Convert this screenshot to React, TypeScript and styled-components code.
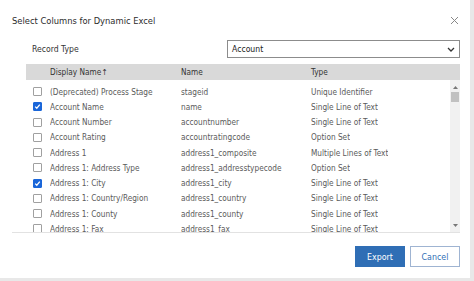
import styled, { createGlobalStyle } from 'styled-components';

const GlobalStyle = createGlobalStyle`
	html, body {
		margin: 0;
		padding: 0;
		background-color: #e8e8e8;
		font-family: 'DejaVu Sans Condensed', 'Liberation Sans', sans-serif;
	}
`;

type Column = { label: string; checked: boolean; name: string; type: string };

const rows: Column[] = [
	{ label: '(Deprecated) Process Stage', checked: false, name: 'stageid', type: 'Unique Identifier' },
	{ label: 'Account Name', checked: true, name: 'name', type: 'Single Line of Text' },
	{ label: 'Account Number', checked: false, name: 'accountnumber', type: 'Single Line of Text' },
	{ label: 'Account Rating', checked: false, name: 'accountratingcode', type: 'Option Set' },
	{ label: 'Address 1', checked: false, name: 'address1_composite', type: 'Multiple Lines of Text' },
	{ label: 'Address 1: Address Type', checked: false, name: 'address1_addresstypecode', type: 'Option Set' },
	{ label: 'Address 1: City', checked: true, name: 'address1_city', type: 'Single Line of Text' },
	{ label: 'Address 1: Country/Region', checked: false, name: 'address1_country', type: 'Single Line of Text' },
	{ label: 'Address 1: County', checked: false, name: 'address1_county', type: 'Single Line of Text' },
	{ label: 'Address 1: Fax', checked: false, name: 'address1_fax', type: 'Single Line of Text' },
];

export default function App() {
	return (
		<>
			<GlobalStyle />
			<SDialog>
				<STitleBar>
					<STitle>Select Columns for Dynamic Excel</STitle>
					<SClose>
						<svg width='9' height='9' viewBox='0 0 9 9'>
							<path d='M1 1L8 8M8 1L1 8' stroke='#888' strokeWidth='1' fill='none' />
						</svg>
					</SClose>
				</STitleBar>
				<SFieldRow>
					<SFieldLabel>Record Type</SFieldLabel>
					<SSelect>
						<span>Account</span>
						<svg width='8' height='5' viewBox='0 0 8 5'>
							<path d='M1 1L4 4L7 1' stroke='#333' strokeWidth='1.3' fill='none' />
						</svg>
					</SSelect>
				</SFieldRow>
				<STable>
					<SHeadRow>
						<SCheckCell />
						<SHeadCell $width={131}>Display Name↑</SHeadCell>
						<SHeadCell $width={130}>Name</SHeadCell>
						<SHeadCell>Type</SHeadCell>
					</SHeadRow>
					<SBody>
						<SRows>
							{rows.map((r) => (
								<SRow key={r.label}>
									<SCheckCell>
										<SCheckbox $checked={r.checked}>
											{r.checked && (
												<svg width='7' height='7' viewBox='0 0 7 7'>
													<path d='M1.2 3.6L2.8 5.2L5.8 1.6' stroke='#fff' strokeWidth='1.3' fill='none' />
												</svg>
											)}
										</SCheckbox>
									</SCheckCell>
									<SCell $width={131}>{r.label}</SCell>
									<SCell $width={130}>{r.name}</SCell>
									<SCell>{r.type}</SCell>
								</SRow>
							))}
						</SRows>
						<SScrollbar>
							<SArrow viewBox='0 0 5 3' width='5' height='3'>
								<path d='M0 3L2.5 0L5 3Z' fill='#777' />
							</SArrow>
							<SThumb />
							<SSpacer />
							<SArrow viewBox='0 0 5 3' width='5' height='3'>
								<path d='M0 0L2.5 3L5 0Z' fill='#777' />
							</SArrow>
						</SScrollbar>
					</SBody>
				</STable>
				<SFooter>
					<SPrimaryButton type='button'>Export</SPrimaryButton>
					<SButton type='button'>Cancel</SButton>
				</SFooter>
			</SDialog>
		</>
	);
}

const SDialog = styled.div`
	width: 470px;
	height: 278px;
	background-color: #ffffff;
	box-sizing: border-box;
	padding: 0 10px 0 12px;
	display: flex;
	flex-direction: column;
	color: #333;
`;

const STitleBar = styled.div`
	height: 40px;
	display: flex;
	align-items: center;
	justify-content: space-between;
`;

const STitle = styled.div`
	font-size: 9.3px;
	color: #2b2b2b;
	margin-top: 1px;
`;

const SClose = styled.div`
	width: 12px;
	display: flex;
	align-items: center;
	justify-content: center;
`;

const SFieldRow = styled.div`
	display: flex;
	align-items: center;
	justify-content: space-between;
	height: 18px;
	padding-left: 20px;
`;

const SFieldLabel = styled.div`
	font-size: 8.6px;
	color: #333;
`;

const SSelect = styled.div`
	width: 233px;
	height: 18px;
	box-sizing: border-box;
	border: 1px solid #8c8c8c;
	display: flex;
	align-items: center;
	justify-content: space-between;
	padding: 0 4px 0 4px;
	font-size: 8.6px;
	color: #222;
`;

const STable = styled.div`
	margin-top: 6px;
	display: flex;
	flex-direction: column;
	height: 168px;
	border-bottom: 1px solid #e2e2e2;
	padding-left: 14px;
`;

const SHeadRow = styled.div`
	display: flex;
	align-items: center;
	height: 16px;
	background-color: #d9d9d9;
	flex-shrink: 0;
`;

const SHeadCell = styled.div<{ $width?: number }>`
	width: ${(p) => (p.$width ? `${p.$width}px` : 'auto')};
	font-size: 8.2px;
	color: #333;
	white-space: nowrap;
`;

const SBody = styled.div`
	flex: 1;
	display: flex;
	overflow: hidden;
`;

const SRows = styled.div`
	flex: 1;
	padding-top: 4px;
	overflow: hidden;
`;

const SRow = styled.div`
	display: flex;
	align-items: center;
	height: 15.25px;
`;

const SCheckCell = styled.div`
	width: 24px;
	padding-left: 7px;
	box-sizing: border-box;
	display: flex;
	align-items: center;
	flex-shrink: 0;
`;

const SCheckbox = styled.div<{ $checked: boolean }>`
	width: 7px;
	height: 7px;
	border: 1px solid ${(p) => (p.$checked ? '#1a66d9' : '#a0a0a0')};
	background-color: ${(p) => (p.$checked ? '#1a66d9' : '#fff')};
	display: flex;
	align-items: center;
	justify-content: center;
	border-radius: 1px;
`;

const SCell = styled.div<{ $width?: number }>`
	width: ${(p) => (p.$width ? `${p.$width}px` : 'auto')};
	font-size: 8.2px;
	line-height: 14px;
	color: #5a5a5a;
	white-space: nowrap;
	overflow: hidden;
	flex-shrink: 0;
`;

const SScrollbar = styled.div`
	width: 10px;
	background-color: #f1f1f1;
	display: flex;
	flex-direction: column;
	align-items: center;
	padding: 6px 0 5px;
	box-sizing: border-box;
`;

const SArrow = styled.svg`
	display: block;
	flex-shrink: 0;
`;

const SThumb = styled.div`
	width: 8px;
	height: 10px;
	margin-top: 3px;
	background-color: #c1c1c1;
`;

const SSpacer = styled.div`
	flex: 1;
`;

const SFooter = styled.div`
	display: flex;
	justify-content: flex-end;
	gap: 5px;
	padding-top: 13px;
`;

const SPrimaryButton = styled.button`
	width: 50px;
	height: 21px;
	background-color: #2f6eb5;
	border: 1px solid #2f6eb5;
	color: #fff;
	font-family: inherit;
	font-size: 8.8px;
	padding: 0;
`;

const SButton = styled.button`
	width: 50px;
	height: 21px;
	background-color: #fff;
	border: 1px solid #9fb4d2;
	color: #2f6eb5;
	font-family: inherit;
	font-size: 8.8px;
	padding: 0;
`;
